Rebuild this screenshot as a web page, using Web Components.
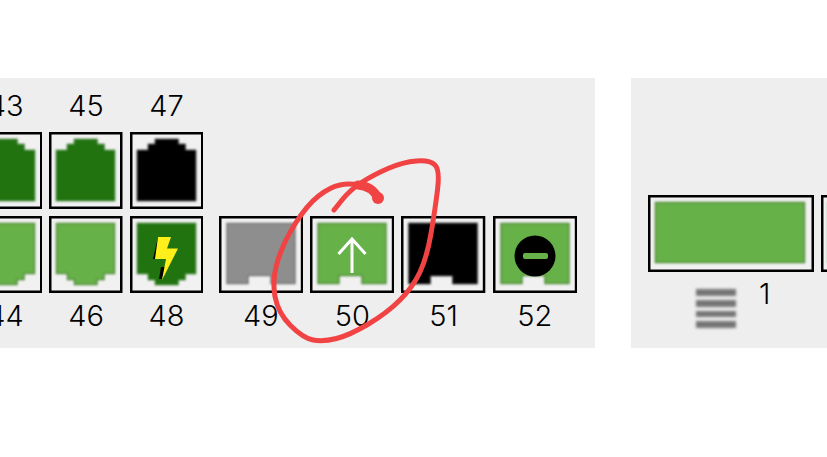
<!DOCTYPE html>
<html>
<head>
<meta charset="utf-8">
<title>Switch ports</title>
<style>
  html, body { margin: 0; height: 100%; overflow: hidden; background: #fff; }
  body { font-family: Inter, "Liberation Sans", sans-serif; font-weight: 300; color: #000; }
</style>
</head>
<body>
<switch-view>
  <port-panel slot="left" align="end">
    <port-column num-top="43" num-bottom="44" tone-top="dark" tone-bottom="light"></port-column>
    <port-column num-top="45" num-bottom="46" tone-top="dark" tone-bottom="light"></port-column>
    <port-column num-top="47" num-bottom="48" tone-top="black" tone-bottom="dark" badge-bottom="power"></port-column>
    <sfp-column num="49" tone="gray" class="first"></sfp-column>
    <sfp-column num="50" tone="light" badge="up"></sfp-column>
    <sfp-column num="51" tone="black"></sfp-column>
    <sfp-column num="52" tone="light" badge="block"></sfp-column>
  </port-panel>
  <port-panel slot="right" align="start">
    <lag-column num="1"></lag-column>
    <lag-column></lag-column>
  </port-panel>
</switch-view>

<script>
const TONES = {
  light: { fill: '#66b148', edge: '#548f3e' },
  dark: { fill: '#20730f', edge: '#2c7a20' },
  black: { fill: '#000', edge: '#111' },
  gray: { fill: '#8e8e8e', edge: '#777' }
};

// top row tab points up, bottom row points down
const SHAPES = {
  up: 'M7.500 18.500H18.500V12.500H25.500V7.500H48V12.500H55V18.500H65.500V68.500H7.500Z',
  down: 'M7.500 7.500H65.500V57.500H55V63.500H48V68.500H25.500V63.500H18.500V57.500H7.500Z',
  sfp: 'M8 7.500H76V67.500H52V59.500H29V67.500H8Z',
  lag: 'M7.500 7.500H156.500V67.500H7.500Z'
};

const BADGES = {
  power: `<path d="M28 21L23 43H27L31 21ZM31 51L29 63H32L35 51Z" fill="#000"/>
          <path d="M28 21H41L37 32.500H48L32 64L36 43H25Z" fill="#ffef1a"/>`,
  up: `<path d="M42 57V23M28.500 38L42 23L55.500 38" fill="none" stroke="#fff" stroke-width="3"/>`,
  block: `<circle cx="42" cy="40" r="20.500" fill="#000"/>
          <rect x="30" y="37" width="25" height="6" rx="2" fill="#66b148"/>`
};

class NetPort extends HTMLElement {
  connectedCallback() {
    const shape = this.getAttribute('shape');
    const tone = TONES[this.getAttribute('tone')] || TONES.light;
    const badge = BADGES[this.getAttribute('badge')] || '';
    const w = Number(this.getAttribute('w'));
    this.attachShadow({ mode: 'open' });
    this.shadowRoot.innerHTML = `
      <style>
        :host { display: block; width: ${w}px; height: 77px; flex: none; }
        svg { display: block; }
        .body { filter: blur(0.9px); }
        .frame { filter: blur(0.3px); }
      </style>
      <svg width="${w}" height="77" viewBox="0 0 ${w} 77">
        <rect class="frame" x="1.250" y="1.250" width="${w - 2.5}" height="74.500" fill="#f1f1f1" stroke="#000" stroke-width="2.500"/>
        <path class="body" d="${SHAPES[shape]}" fill="${tone.fill}" stroke="${tone.edge}" stroke-width="1.500"/>
        ${badge}
      </svg>
    `;
  }
}

class PortColumn extends HTMLElement {
  connectedCallback() {
    const a = name => this.getAttribute(name) || '';
    this.attachShadow({ mode: 'open' });
    this.shadowRoot.innerHTML = `
      <style>
        :host { display: flex; flex-direction: column; width: 73.500px; flex: none; align-items: center; }
        .num { font-size: 29px; line-height: 34px; text-align: center; white-space: nowrap; }
        .top { padding-top: 11px; height: 43px; }
        .bottom { padding-top: 6px; }
        net-port + net-port { margin-top: 7px; }
      </style>
      <div class="num top">${a('num-top')}</div>
      <net-port shape="up" w="73.500" tone="${a('tone-top')}" badge="${a('badge-top')}"></net-port>
      <net-port shape="down" w="73.500" tone="${a('tone-bottom')}" badge="${a('badge-bottom')}"></net-port>
      <div class="num bottom">${a('num-bottom')}</div>
    `;
  }
}

class SfpColumn extends HTMLElement {
  connectedCallback() {
    const a = name => this.getAttribute(name) || '';
    this.attachShadow({ mode: 'open' });
    this.shadowRoot.innerHTML = `
      <style>
        :host { display: flex; flex-direction: column; width: 84.300px; flex: none; align-items: center; padding-top: 138px; }
        :host(.first) { margin-left: 8.500px; }
        .num { font-size: 29px; line-height: 34px; padding-top: 6px; }
      </style>
      <net-port shape="sfp" w="84.300" tone="${a('tone')}" badge="${a('badge')}"></net-port>
      <div class="num">${a('num')}</div>
    `;
  }
}

class LagColumn extends HTMLElement {
  connectedCallback() {
    const num = this.getAttribute('num') || '';
    this.attachShadow({ mode: 'open' });
    this.shadowRoot.innerHTML = `
      <style>
        :host { display: flex; flex-direction: column; width: 166px; flex: none; padding-top: 117px; }
        .foot { display: flex; height: 48px; }
        .stack { display: flex; flex-direction: column; gap: 4px; width: 40px; height: 39px; margin: 17px 0 0 48px; filter: blur(1.500px); }
        .stack i { display: block; height: 7px; background: #747474; }
        .num { font-size: 29px; line-height: 34px; margin: 5px 0 0 23px; }
      </style>
      <net-port shape="lag" w="166" tone="light"></net-port>
      <div class="foot">
        ${num ? `<div class="stack"><i></i><i></i><i></i><i></i></div><div class="num">${num}</div>` : ''}
      </div>
    `;
  }
}

class PortPanel extends HTMLElement {
  connectedCallback() {
    const end = this.getAttribute('align') === 'end';
    this.attachShadow({ mode: 'open' });
    this.shadowRoot.innerHTML = `
      <style>
        :host { display: flex; height: 270px; background: #eeeeee; overflow: hidden; gap: 7px;
                justify-content: ${end ? 'flex-end' : 'flex-start'};
                padding: ${end ? '0 18px 0 0' : '0 0 0 17px'}; box-sizing: border-box; }
      </style>
      <slot></slot>
    `;
  }
}

class SwitchView extends HTMLElement {
  connectedCallback() {
    this.attachShadow({ mode: 'open' });
    this.shadowRoot.innerHTML = `
      <style>
        :host { display: grid; grid-template-columns: 595px 196px; column-gap: 36px; padding-top: 78px; position: relative; width: 827px; height: 457px; box-sizing: border-box; }
        svg { position: absolute; left: 0; top: 0; pointer-events: none; }
      </style>
      <slot name="left"></slot>
      <slot name="right"></slot>
      <svg width="827" height="457" viewBox="0 0 827 457">
        <path id="mark" fill="none" stroke="#f14343" stroke-width="5" stroke-linecap="round" stroke-linejoin="round"/>
        <path d="M358 185Q372 186 378 198" fill="none" stroke="#f14343" stroke-width="9" stroke-linecap="round"/>
        <circle cx="378" cy="198" r="6" fill="#f14343"/>
      </svg>
    `;
    // hand drawn ring, smoothed through the midpoints
    const pts = [[378,198],[370,188],[350,183],[330,187],[307,205],[283,243],[272,280],[278,313],[303,338],[323,342],[350,335],[387,313],[413,287],[427,257],[435,210],[440,170],[430,160],[403,162],[373,175],[350,190],[334,210]];
    let d = `M${pts[0]}`;
    for (let i = 1; i < pts.length - 1; i++) {
      const mx = (pts[i][0] + pts[i + 1][0]) / 2;
      const my = (pts[i][1] + pts[i + 1][1]) / 2;
      d += `Q${pts[i]} ${mx},${my}`;
    }
    d += `L${pts[pts.length - 1]}`;
    this.shadowRoot.getElementById('mark').setAttribute('d', d);
  }
}

customElements.define('net-port', NetPort);
customElements.define('port-column', PortColumn);
customElements.define('sfp-column', SfpColumn);
customElements.define('lag-column', LagColumn);
customElements.define('port-panel', PortPanel);
customElements.define('switch-view', SwitchView);
</script>
</body>
</html>
